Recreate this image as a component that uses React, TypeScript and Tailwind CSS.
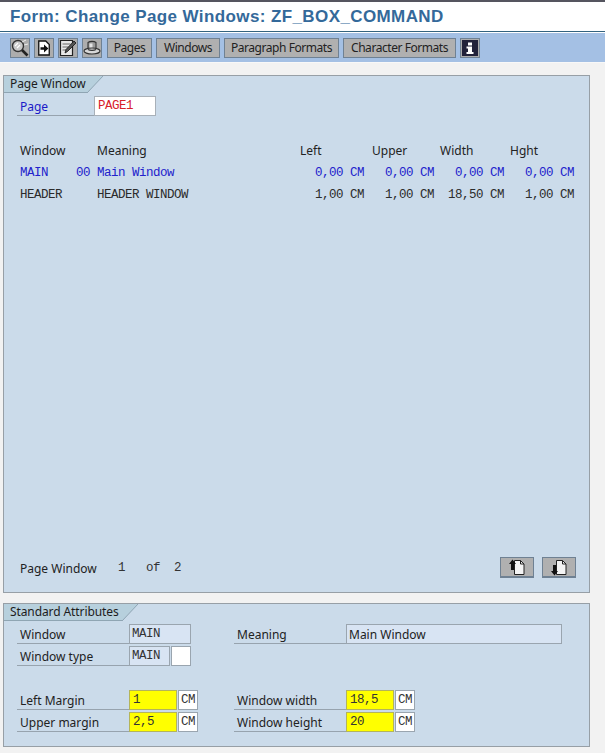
const sans = "font-['Noto_Sans','Liberation_Sans',sans-serif]";
const mono = "font-['Liberation_Mono',monospace] text-[12.5px] tracking-[-0.5px]";

function SearchIcon() {
  return (
    <svg width="18" height="18" viewBox="0 0 18 18">
      <circle cx="7" cy="7" r="5.5" fill="#c9c9c9" stroke="#333" strokeWidth="1.4" />
      <path d="M4 7l3-3M6 9l3-3" stroke="#fff" strokeWidth="1.2" />
      <path d="M11 11l5.5 5.5" stroke="#222" strokeWidth="2.6" />
      <path d="M11 3l4-2M13 6l4-1" stroke="#eee" strokeWidth="1" />
    </svg>
  );
}

function PageArrowIcon() {
  return (
    <svg width="14" height="16" viewBox="0 0 16 18">
      <path d="M2 1h8l4 4v12H2z" fill="#fff" stroke="#111" strokeWidth="1.5" />
      <path d="M4 8h4V5l5 4.5L8 14v-3H4z" fill="#111" />
    </svg>
  );
}

function EditIcon() {
  return (
    <svg width="18" height="18" viewBox="0 0 18 18">
      <path d="M1.5 1.5h12v15h-12z" fill="#e8e8e8" stroke="#222" strokeWidth="1.2" />
      <path d="M3.5 5h8M3.5 8h6M3.5 11h4" stroke="#666" strokeWidth="1" />
      <path d="M6 14l1-3.5L15 2l2 2-8.5 8.5z" fill="#555" stroke="#111" strokeWidth="0.8" />
    </svg>
  );
}

function HatIcon() {
  return (
    <svg width="18" height="16" viewBox="0 0 18 16">
      <path d="M5 2.5C7 1 11 1 13 2.5V10H5z" fill="#9a9a9a" stroke="#333" strokeWidth="1.1" />
      <path d="M6.5 3.5h3V8h-3z" fill="#e4e4e4" />
      <ellipse cx="9" cy="11" rx="8" ry="3" fill="#d8d8d8" stroke="#333" strokeWidth="1.1" />
      <path d="M5 9.5c2 1.2 6 1.2 8 0" stroke="#333" strokeWidth="1.1" fill="none" />
    </svg>
  );
}

function InfoIcon() {
  return (
    <svg width="16" height="16" viewBox="0 0 16 16">
      <rect width="16" height="16" fill="#22223a" />
      <path d="M6 2.5h4v3H6zM4.5 6.5H10V12h1.5v2h-7v-2H6V8.5H4.5z" fill="#fff" />
    </svg>
  );
}

function PrevPageIcon() {
  return (
    <svg width="16" height="17" viewBox="0 0 16 17">
      <path d="M5.5 1.5h6l3.5 3.5v10.5H5.5z" fill="#f4f4f4" stroke="#222" strokeWidth="1" />
      <path d="M11.5 1.5V5H15" fill="none" stroke="#222" strokeWidth="1" />
      <path d="M3.5 0.5L7 5H5v6H2V5H0z" fill="#111" />
    </svg>
  );
}

function NextPageIcon() {
  return (
    <svg width="16" height="17" viewBox="0 0 16 17">
      <path d="M5.5 1.5h6l3.5 3.5v10.5H5.5z" fill="#f4f4f4" stroke="#222" strokeWidth="1" />
      <path d="M11.5 1.5V5H15" fill="none" stroke="#222" strokeWidth="1" />
      <path d="M3.5 16.5L7 12H5V6H2v6H0z" fill="#111" />
    </svg>
  );
}

function ToolIcon({ children }: { children: React.ReactNode }) {
  return (
    <div className="w-5 h-5 bg-[#adadad] border border-[#6f8193] flex items-center justify-center">
      {children}
    </div>
  );
}

function ToolButton({ label, w }: { label: string; w: string }) {
  return (
    <div className={`${w} h-5 bg-[#b0b0b0] border border-[#6f8193] flex items-center justify-center text-[12px] tracking-[-0.45px] text-[#222]`}>
      {label}
    </div>
  );
}

function PanelTab({ label, w }: { label: string; w: string }) {
  return (
    <div className="flex h-[17px] text-[12px] tracking-[-0.1px] text-[#1c1c1c]">
      <div className={`${w} bg-[#b7d0dd] border-b border-[#8fa5b3] pl-1.5 leading-[16px]`}>{label}</div>
      <svg width="16" height="17" viewBox="0 0 16 17" className="block">
        <path d="M0 0H16L0 17z" fill="#b7d0dd" />
        <path d="M16 0L0 17" stroke="#8fa5b3" strokeWidth="1" />
      </svg>
    </div>
  );
}

function Label({ text, w, blue }: { text: string; w: string; blue?: boolean }) {
  return (
    <div className={`${w} h-5 border-b border-[#97a3ae] pl-[3px] leading-[21px] text-[12px] ${blue ? "text-[#1a1ac8]" : "text-[#222]"}`}>
      {text}
    </div>
  );
}

function ShowField({ text, w, wide }: { text: string; w: string; wide?: boolean }) {
  return (
    <div className={`${w} h-5 bg-[#d8e4f3] border border-[#9aa5af] pl-[2px] leading-[19px] ${wide ? "text-[12px] text-[#222]" : `${mono} text-[#333]`}`}>
      {text}
    </div>
  );
}

function YellowInput({ text }: { text: string }) {
  return (
    <div className={`w-[48px] h-5 bg-[#ffff00] border border-[#b4b45a] pl-[3px] leading-[19px] ${mono} text-[#333]`}>
      {text}
    </div>
  );
}

function UnitBox() {
  return (
    <div className={`w-5 h-5 ml-px bg-white border border-[#9aa5af] text-center leading-[19px] ${mono} text-[#333]`}>
      CM
    </div>
  );
}

function MeasureRow({ label, value }: { label: string; value: string }) {
  return (
    <div className="flex">
      <Label text={label} w="w-[112px]" />
      <YellowInput text={value} />
      <UnitBox />
    </div>
  );
}

function WindowRow({ name, num, meaning, vals, color }: { name: string; num: string; meaning: string; vals: string[]; color: string }) {
  return (
    <div className={`flex h-[22px] leading-[22px] whitespace-pre ${mono} ${color}`}>
      <div className="w-[56px]">{name}</div>
      <div className="w-[21px]">{num}</div>
      <div className="w-[197px]">{meaning}</div>
      {vals.map((v, i) => (
        <div key={i} className="w-[70px] text-right">{v} CM</div>
      ))}
    </div>
  );
}

function PageButton({ children }: { children: React.ReactNode }) {
  return (
    <div className="w-[34px] h-[21px] bg-[#b0b0b0] border border-[#6f8193] border-b-2 flex items-center justify-center">
      {children}
    </div>
  );
}

export default function App() {
  return (
    <div className={`w-[605px] h-[753px] overflow-hidden bg-[#f2f2f2] flex flex-col ${sans}`}>
      <div className="h-[2px] bg-[#55555f]" />
      <div className="h-[29px] bg-white pl-[10px] font-['Liberation_Sans',sans-serif] font-bold text-[17px] leading-[29px] tracking-[0.4px] text-[#34699a] whitespace-nowrap">
        Form: Change Page Windows: ZF_BOX_COMMAND
      </div>
      <div className="h-[1px] bg-[#33637f]" />
      <div className="h-[1px] bg-white" />
      <div className="h-[29px] bg-[#a4c0e4] pt-[5px] pl-[10px] flex gap-1">
        <ToolIcon><SearchIcon /></ToolIcon>
        <ToolIcon><PageArrowIcon /></ToolIcon>
        <ToolIcon><EditIcon /></ToolIcon>
        <ToolIcon><HatIcon /></ToolIcon>
        <div className="ml-px">
          <ToolButton label="Pages" w="w-[45px]" />
        </div>
        <ToolButton label="Windows" w="w-[64px]" />
        <ToolButton label="Paragraph Formats" w="w-[115px]" />
        <ToolButton label="Character Formats" w="w-[113px]" />
        <ToolIcon><InfoIcon /></ToolIcon>
      </div>
      <div className="h-[1px] bg-[#f8f8f8]" />

      {/* Page Window */}
      <div className="mt-[12px] ml-[3px] w-[587px] h-[518px] bg-[#cbdbea] border border-[#979fa6] flex flex-col">
        <PanelTab label="Page Window" w="w-[83px]" />
        <div className="flex pl-[13px] mt-[3px]">
          <Label text="Page" w="w-[77px]" blue />
          <div className={`w-[62px] h-5 bg-white border border-[#a8b0b8] pl-[3px] leading-[19px] ${mono} text-[#d8202a]`}>
            PAGE1
          </div>
        </div>
        <div className="pl-4 mt-[24px]">
          <div className="flex h-[22px] leading-[22px] text-[12px] text-[#222]">
            <div className="w-[77px]">Window</div>
            <div className="w-[203px]">Meaning</div>
            <div className="w-[72px]">Left</div>
            <div className="w-[68px]">Upper</div>
            <div className="w-[70px]">Width</div>
            <div>Hght</div>
          </div>
          <WindowRow name="MAIN" num="00" meaning="Main Window" vals={["0,00", "0,00", "0,00", "0,00"]} color="text-[#2222cc]" />
          <WindowRow name="HEADER" num="" meaning="HEADER WINDOW" vals={["1,00", "1,00", "18,50", "1,00"]} color="text-[#2b2b2b]" />
        </div>
        <div className="flex-1" />
        <div className="flex pl-4 pr-[13px] mb-[14px] h-[21px]">
          <div className="flex pt-[1px] leading-[21px]">
            <div className="w-[98px] text-[12px] text-[#222]">Page Window</div>
            <div className={`${mono} text-[#333] w-[28px]`}>1</div>
            <div className={`${mono} text-[#333] w-[28px]`}>of</div>
            <div className={`${mono} text-[#333]`}>2</div>
          </div>
          <div className="flex-1" />
          <div className="flex gap-2">
            <PageButton><PrevPageIcon /></PageButton>
            <PageButton><NextPageIcon /></PageButton>
          </div>
        </div>
      </div>

      {/* Standard Attributes */}
      <div className="mt-[10px] ml-[3px] w-[587px] h-[144px] bg-[#cbdbea] border border-[#979fa6] flex flex-col">
        <PanelTab label="Standard Attributes" w="w-[118px]" />
        <div className="pl-[13px] mt-[3px] flex flex-col">
          <div className="flex">
            <Label text="Window" w="w-[112px]" />
            <ShowField text="MAIN" w="w-[62px]" />
            <div className="w-[43px]" />
            <Label text="Meaning" w="w-[112px]" />
            <ShowField text="Main Window" w="w-[216px]" wide />
          </div>
          <div className="flex mt-[2px]">
            <Label text="Window type" w="w-[112px]" />
            <ShowField text="MAIN" w="w-[41px]" />
            <div className="w-5 h-5 ml-px bg-white border border-[#9aa5af]" />
          </div>
          <div className="flex mt-[24px]">
            <MeasureRow label="Left Margin" value="1" />
            <div className="w-[36px]" />
            <MeasureRow label="Window width" value="18,5" />
          </div>
          <div className="flex mt-[2px]">
            <MeasureRow label="Upper margin" value="2,5" />
            <div className="w-[36px]" />
            <MeasureRow label="Window height" value="20" />
          </div>
        </div>
      </div>
    </div>
  );
}
